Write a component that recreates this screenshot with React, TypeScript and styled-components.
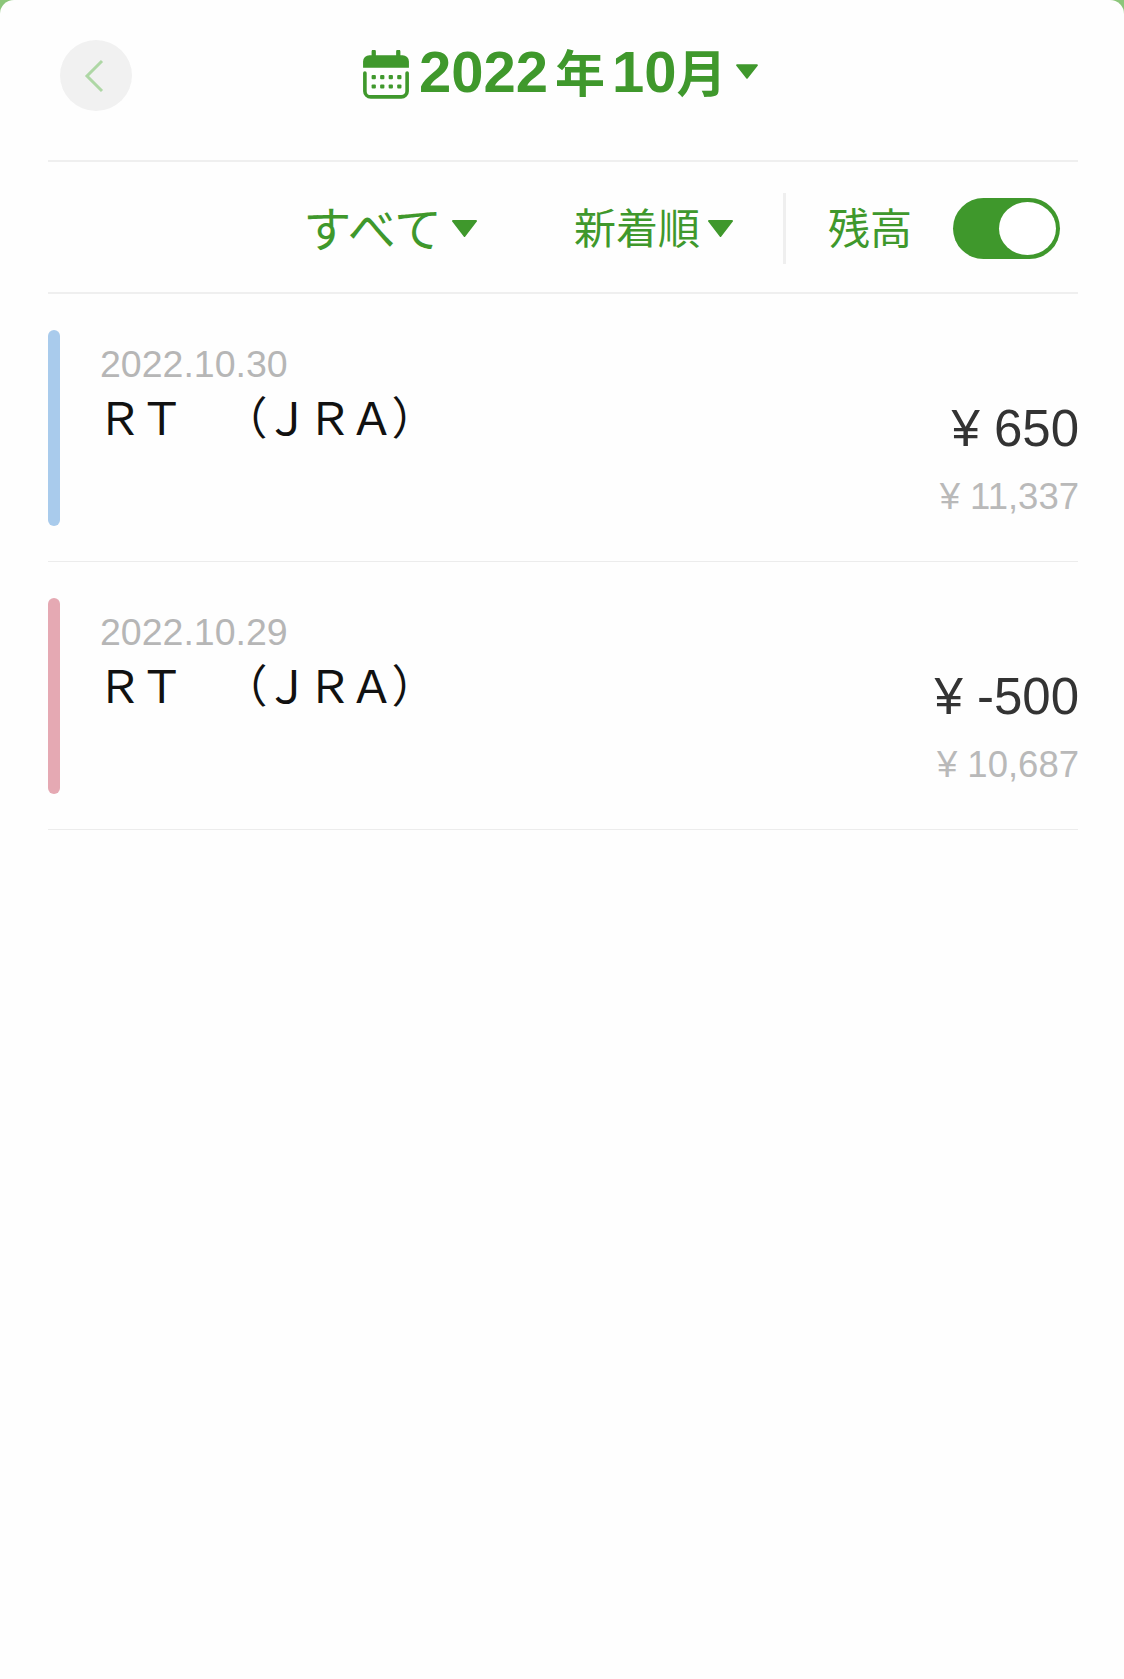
import React from 'react'
import styled, { createGlobalStyle } from 'styled-components'

const GREEN = '#3f982c'
const SANS = '"Liberation Sans", "Noto Sans CJK JP", sans-serif'

const GlobalStyle = createGlobalStyle`
  html, body {
    margin: 0;
    padding: 0;
    background: #8cc67a;
  }
  * {
    box-sizing: border-box;
  }
`

const Page = styled.div`
  width: 1124px;
  height: 1679px;
  padding: 0 46px 0 48px;
  background: #fefefe;
  border-radius: 14px 14px 0 0;
  font-family: ${SANS};
  overflow: hidden;
`

const Header = styled.header`
  height: 162px;
  padding: 40px 0 0 12px;
  display: flex;
  align-items: flex-start;
  border-bottom: 2px solid #efefef;
`

const BackButton = styled.button`
  width: 72px;
  height: 71px;
  padding: 0 5px 0 0;
  border: none;
  border-radius: 50%;
  background: #f1f1f1;
  display: flex;
  align-items: center;
  justify-content: center;
`

const Title = styled.div`
  margin-left: 230px;
  display: flex;
  align-items: flex-start;
  color: ${GREEN};
`

const TitleText = styled.span`
  margin: -2px 0 0 9px;
  font-size: 58px;
  line-height: 68px;
  font-weight: 700;
  white-space: nowrap;
`

const TitleKanji = styled.span<{ $left: number; $right: number }>`
  margin: 0 ${({ $right }) => $right}px 0 ${({ $left }) => $left}px;
  font-size: 50px;
`

const Caret = styled.svg<{ $top: number; $gap: number }>`
  flex: none;
  margin-top: ${({ $top }) => $top}px;
  margin-left: ${({ $gap }) => $gap}px;
`

const FilterBar = styled.div`
  height: 132px;
  padding: 2px 18px 0 0;
  display: flex;
  align-items: center;
  justify-content: flex-end;
  border-bottom: 2px solid #efefef;
`

const FilterItem = styled.div<{ $left?: number }>`
  margin-left: ${({ $left }) => $left ?? 0}px;
  display: flex;
  align-items: center;
  color: ${GREEN};
  font-family: "Noto Sans CJK JP", sans-serif;
  white-space: nowrap;
`

const FilterLabel = styled.span<{ $size: number }>`
  margin-bottom: 4px;
  font-size: ${({ $size }) => $size}px;
  line-height: 56px;
`

const Separator = styled.div`
  width: 3px;
  height: 71px;
  margin: 0 42px 0 50px;
  background: #efefef;
`

const Toggle = styled.div`
  width: 107px;
  height: 61px;
  margin-left: 41px;
  padding: 4px;
  border-radius: 31px;
  background: ${GREEN};
  display: flex;
  justify-content: flex-end;
`

const Knob = styled.div`
  width: 57px;
  height: 53px;
  border-radius: 50%;
  background: #fff;
`

const Row = styled.div`
  height: 268px;
  padding-top: 36px;
  display: flex;
  border-bottom: 1px solid #ececec;
`

const Bar = styled.div<{ $color: string }>`
  width: 12px;
  height: 196px;
  border-radius: 6px;
  background: ${({ $color }) => $color};
`

const Info = styled.div`
  flex: 1;
  margin-left: 40px;
`

const DateText = styled.div`
  margin-top: 16px;
  color: #b6b6b6;
  font-size: 37.5px;
  line-height: 36px;
`

const Name = styled.div`
  margin: 4px 0 0 -3px;
  color: #111;
  font-family: "Noto Sans CJK JP", sans-serif;
  font-size: 45px;
  line-height: 60px;
  font-weight: 400;
  letter-spacing: -2.7px;
  white-space: pre;
`

const NameGap = styled.span`
  margin-right: 21px;
`

const Amounts = styled.div`
  margin-right: -1px;
  padding-top: 71px;
  text-align: right;
`

const Amount = styled.div`
  color: #333;
  font-size: 51px;
  line-height: 56px;
`

const Balance = styled.div`
  margin-top: 19px;
  color: #b9b9b9;
  font-size: 36.5px;
  line-height: 42px;
`

const CalendarIcon = () => (
  <svg width="48" height="50" viewBox="0 0 45 48" preserveAspectRatio="none" style={{ marginTop: 10 }}>
    <path
      fill={GREEN}
      d="M9 1.5a2 2 0 0 1 4 0V5h19V1.5a2 2 0 0 1 4 0V5h2a6 6 0 0 1 6 6v6H1v-6a6 6 0 0 1 6-6h2z"
    />
    <path
      fill="none"
      stroke={GREEN}
      strokeWidth="3.4"
      strokeLinecap="round"
      d="M2.7 22v17.5a5.5 5.5 0 0 0 5.5 5.5h28.6a5.5 5.5 0 0 0 5.5-5.5V22"
    />
    {[24, 33].map(y =>
      [9, 17, 25, 33].map(x => <rect key={`${x}-${y}`} x={x} y={y} width="4" height="4" rx="1" fill={GREEN} />),
    )}
  </svg>
)

const FilterCaret = ({ gap }: { gap: number }) => (
  <Caret $top={0} $gap={gap} width="25" height="17" viewBox="0 0 25 17">
    <path d="M1 0h23a1 1 0 0 1 .8 1.6L13.3 16.4a1 1 0 0 1-1.6 0L.2 1.6A1 1 0 0 1 1 0z" fill={GREEN} />
  </Caret>
)

const rows = [
  { color: '#a9cbec', date: '2022.10.30', amount: '¥ 650', balance: '¥ 11,337' },
  { color: '#e5a9b3', date: '2022.10.29', amount: '¥ -500', balance: '¥ 10,687' },
]

export default function App() {
  return (
    <>
      <GlobalStyle />
      <Page>
        <Header>
          <BackButton aria-label="戻る">
            <svg width="20" height="34" viewBox="0 0 20 34">
              <path d="M18 2 3 17l15 15" fill="none" stroke="#aed7a5" strokeWidth="3" />
            </svg>
          </BackButton>
          <Title>
            <CalendarIcon />
            <TitleText>
              2022
              <TitleKanji $left={7} $right={7}>年</TitleKanji>
              10
              <TitleKanji $left={0} $right={0}>月</TitleKanji>
            </TitleText>
            <Caret $top={24} $gap={9} width="22" height="15" viewBox="0 0 21 14">
              <path d="M1 0h19a1 1 0 0 1 .7 1.6L11.3 13.4a1 1 0 0 1-1.6 0L.3 1.6A1 1 0 0 1 1 0z" fill={GREEN} />
            </Caret>
          </Title>
        </Header>
        <FilterBar>
          <FilterItem>
            <FilterLabel $size={48}>すべて</FilterLabel>
            <FilterCaret gap={10} />
          </FilterItem>
          <FilterItem $left={97}>
            <FilterLabel $size={42}>新着順</FilterLabel>
            <FilterCaret gap={8} />
          </FilterItem>
          <Separator />
          <FilterItem>
            <FilterLabel $size={42}>残高</FilterLabel>
          </FilterItem>
          <Toggle>
            <Knob />
          </Toggle>
        </FilterBar>
        {rows.map(row => (
          <Row key={row.date}>
            <Bar $color={row.color} />
            <Info>
              <DateText>{row.date}</DateText>
              <Name>
                ＲＴ
                <NameGap>　</NameGap>
                （ＪＲＡ）
              </Name>
            </Info>
            <Amounts>
              <Amount>{row.amount}</Amount>
              <Balance>{row.balance}</Balance>
            </Amounts>
          </Row>
        ))}
      </Page>
    </>
  )
}
